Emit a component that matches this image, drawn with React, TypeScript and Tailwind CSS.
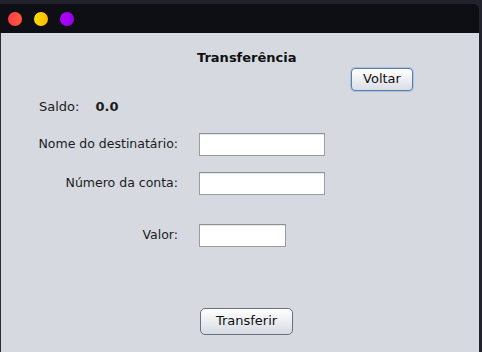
import React from "react";

const font = { fontFamily: '"DejaVu Sans", "Liberation Sans", sans-serif' };

function Field({ w }: { w: string }) {
    return (
        <div className={`${w} h-[23px] bg-white border border-[#9a9ca0] border-t-[#8e9094] shadow-[inset_0_1px_0_#e6e6e6]`} />
    );
}

function Row({ label, children, className }: { label: string; children: React.ReactNode; className: string }) {
    return (
        <div className={`flex items-center ${className}`}>
            <div className="w-[177px] text-right text-[12.5px] leading-[16px] text-[#1c1c1c]">{label}</div>
            <div className="ml-[21px]">{children}</div>
        </div>
    );
}

export default function App() {
    return (
        <div className="w-[482px] h-[352px] bg-[#21222b] pt-[4px] pr-[3px] flex flex-col" style={font}>
            <div className="h-[29px] bg-[#0e0f14] rounded-tr-[6px] flex items-center gap-[12px] pl-[8px]">
                <span className="w-[14px] h-[14px] rounded-full bg-gradient-to-r from-[#ff3b4a] to-[#ff5a3a]" />
                <span className="w-[14px] h-[14px] rounded-full bg-gradient-to-r from-[#ffe000] to-[#ffb800]" />
                <span className="w-[14px] h-[14px] rounded-full bg-gradient-to-r from-[#b400ff] to-[#9400e8]" />
            </div>
            <div className="flex-1 bg-[#d6d9e0] border-l border-[#2c2d36] flex flex-col">
                <div className="pt-[17px] pl-[196px] text-[13px] leading-[16px] font-bold text-[#111]">Transferência</div>
                <div className="pl-[350px]">
                    <button className="w-[62px] h-[23px] rounded-[4px] border border-[#5f7fa8] bg-gradient-to-b from-white to-[#d9dee6] shadow-[0_0_0_1px_#a9c2e2] text-[13px] leading-[16px] text-[#111]">
                        Voltar
                    </button>
                </div>
                <div className="mt-[8px] flex text-[13px] leading-[16px] text-[#1c1c1c]">
                    <span className="pl-[38px]">Saldo:</span>
                    <span className="pl-[16px] font-bold">0.0</span>
                </div>
                <Row label="Nome do destinatário:" className="mt-[18px]">
                    <Field w="w-[126px]" />
                </Row>
                <Row label="Número da conta:" className="mt-[16px]">
                    <Field w="w-[126px]" />
                </Row>
                <Row label="Valor:" className="mt-[29px]">
                    <Field w="w-[87px]" />
                </Row>
                <div className="mt-[61px] pl-[199px]">
                    <button className="w-[93px] h-[27px] rounded-[5px] border border-[#6b717b] bg-gradient-to-b from-white to-[#d6dbe3] text-[13px] leading-[16px] text-[#111]">
                        Transferir
                    </button>
                </div>
            </div>
        </div>
    );
}
